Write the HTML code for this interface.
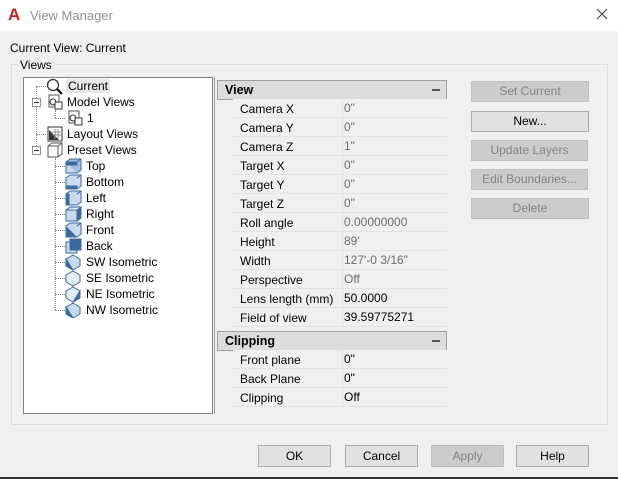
<!DOCTYPE html>
<html><head><style>
*{margin:0;padding:0;box-sizing:border-box}
body{width:618px;height:479px;background:#f0f0f0;font-family:"Liberation Sans",sans-serif;font-size:12px;color:#000;position:relative;overflow:hidden}
.a{position:absolute;white-space:nowrap}
.btn{position:absolute;border:1px solid #adadad;background:#e1e1e1;text-align:center;line-height:19px;font-size:12px}
.dis{background:#cccccc;border-color:#bfbfbf;color:#838383}
.row{position:absolute;left:233px;width:214px;height:19px;border-bottom:1px solid #e3e3e3;background:#f0f0f0}
.row .l{position:absolute;left:7px;top:3px}
.row .v{position:absolute;left:111px;top:2px;color:#6d6d6d}
.row .c{position:absolute;left:109px;top:0;width:1px;height:19px;background:#e3e3e3}
.hdr{position:absolute;left:217px;width:230px;height:20px;background:#dcdcdc;border:1px solid #a0a0a0;font-weight:bold;font-size:12.5px;padding:2px 0 0 7px}
.hdr span{position:absolute;right:6px;top:8px;width:8px;height:2px;background:#555}
.ti{position:absolute;white-space:nowrap;font-size:12px}
</style></head><body>
<div class="a" style="left:0;top:0;width:618px;height:31px;background:#fff"></div>
<div class="a" style="left:8px;top:5px;font-weight:bold;color:#c4232a;font-size:17px">A</div>
<div class="a" style="left:30px;top:8px;color:#909090;font-size:13px">View Manager</div>
<svg class="a" style="left:596px;top:8px" width="12" height="12"><path d="M1 1L11 11M11 1L1 11" stroke="#444" stroke-width="1.1"/></svg>
<div class="a" style="left:10px;top:41px">Current View: Current</div>
<div class="a" style="left:11px;top:64px;width:597px;height:361px;border:1px solid #dcdcdc"></div>
<div class="a" style="left:18px;top:58px;background:#f0f0f0;padding:0 2px">Views</div>
<div class="a" style="left:23px;top:77px;width:190px;height:337px;background:#fff;border:1px solid #828282"></div>
<div class="a" style="left:214px;top:77px;width:1px;height:337px;background:#a0a0a0"></div>
<div class="a" style="left:36px;top:86px;width:1px;height:64px;border-left:1px dotted #888"></div>
<div class="a" style="left:36px;top:86px;width:10px;border-top:1px dotted #888"></div>
<div class="a" style="left:36px;top:134px;width:10px;border-top:1px dotted #888"></div>
<div class="a" style="left:55px;top:110px;width:1px;height:8px;border-left:1px dotted #888"></div>
<div class="a" style="left:55px;top:118px;width:10px;border-top:1px dotted #888"></div>
<div class="a" style="left:55px;top:158px;width:1px;height:152px;border-left:1px dotted #888"></div>
<div class="a" style="left:32px;top:98px;width:9px;height:9px;border:1px solid #919191;background:#fff"><div class="a" style="left:1px;top:3px;width:5px;height:1px;background:#333"></div></div>
<div class="a" style="left:32px;top:146px;width:9px;height:9px;border:1px solid #919191;background:#fff"><div class="a" style="left:1px;top:3px;width:5px;height:1px;background:#333"></div></div>
<svg class="a" style="left:46px;top:78px" width="18" height="18"><circle cx="7" cy="7" r="5.5" fill="#fff" stroke="#333" stroke-width="1.3"/><line x1="11" y1="11" x2="16" y2="16" stroke="#222" stroke-width="2.5"/></svg>
<div class="ti" style="left:66px;top:79px;background:#e8e8e8;padding:0 2px">Current</div>
<svg class="a" style="left:46px;top:94px" width="18" height="16"><rect x="3" y="1" width="10" height="12" fill="#fff" stroke="#555"/><circle cx="7" cy="8" r="3" fill="none" stroke="#333"/><rect x="9" y="8" width="7" height="7" fill="#fff" stroke="#333"/></svg>
<div class="ti" style="left:67px;top:95px">Model Views</div>
<svg class="a" style="left:66px;top:110px" width="18" height="16"><rect x="3" y="1" width="10" height="12" fill="#fff" stroke="#555"/><circle cx="7" cy="8" r="3" fill="none" stroke="#333"/><rect x="9" y="8" width="7" height="7" fill="#fff" stroke="#333"/></svg>
<div class="ti" style="left:87px;top:111px">1</div>
<svg class="a" style="left:47px;top:126px" width="16" height="16"><rect x="1" y="1" width="14" height="14" fill="#fff" stroke="#333"/><path d="M2 14 L2 4 L12 14Z" fill="#333"/><path d="M8 3v10M11 3v10M5 6h9M5 9h9" stroke="#888"/></svg>
<div class="ti" style="left:67px;top:127px">Layout Views</div>
<svg class="a" style="left:46px;top:142px" width="18" height="16"><rect x="2" y="4" width="10" height="11" fill="#fff" stroke="#555"/><path d="M2 4l4-3h10v11l-4 3M12 4l4-3" fill="none" stroke="#555"/></svg>
<div class="ti" style="left:67px;top:143px">Preset Views</div>
<div class="a" style="left:55px;top:166px;width:10px;border-top:1px dotted #888"></div>
<div class="a" style="left:55px;top:182px;width:10px;border-top:1px dotted #888"></div>
<div class="a" style="left:55px;top:198px;width:10px;border-top:1px dotted #888"></div>
<div class="a" style="left:55px;top:214px;width:10px;border-top:1px dotted #888"></div>
<div class="a" style="left:55px;top:230px;width:10px;border-top:1px dotted #888"></div>
<div class="a" style="left:55px;top:246px;width:10px;border-top:1px dotted #888"></div>
<div class="a" style="left:55px;top:262px;width:10px;border-top:1px dotted #888"></div>
<div class="a" style="left:55px;top:278px;width:10px;border-top:1px dotted #888"></div>
<div class="a" style="left:55px;top:294px;width:10px;border-top:1px dotted #888"></div>
<div class="a" style="left:55px;top:310px;width:10px;border-top:1px dotted #888"></div>
<svg class="a" style="left:65px;top:158px" width="18" height="160">
<g stroke="#3d6aa3" fill="#c9d9ee">
<rect x="1" y="4" width="11" height="11"/><path d="M1 4l4-3h11v11l-4 3M12 4l4-3" fill="#9fbde0"/><rect x="1" y="4" width="11" height="3" fill="#3d6aa3"/>
<g transform="translate(0,16)"><rect x="1" y="4" width="11" height="11"/><path d="M1 4l4-3h11v11l-4 3M12 4l4-3"/><rect x="1" y="12" width="11" height="3" fill="#3d6aa3"/></g>
<g transform="translate(0,32)"><rect x="1" y="4" width="11" height="11"/><path d="M1 4l4-3h11v11l-4 3M12 4l4-3"/><rect x="1" y="4" width="3" height="11" fill="#3d6aa3"/></g>
<g transform="translate(0,48)"><rect x="1" y="4" width="11" height="11"/><path d="M12 4l4-3v11l-4 3z" fill="#3d6aa3"/><path d="M1 4l4-3h11" /></g>
<g transform="translate(0,64)"><rect x="1" y="4" width="11" height="11" fill="#3d6aa3"/><path d="M1 4l4-3h11v11l-4 3M12 4l4-3"/></g>
<g transform="translate(0,80)"><rect x="1" y="4" width="11" height="11"/><rect x="5" y="1" width="11" height="11" fill="#3d6aa3"/></g>
<g transform="translate(0,96)"><path d="M8 1l7 4v7l-7 4-7-4V5z"/><path d="M1 5v7l7 4z" fill="#3d6aa3"/></g>
<g transform="translate(0,112)"><path d="M8 1l7 4v7l-7 4-7-4V5z" fill="#e4ecf6"/></g>
<g transform="translate(0,128)"><path d="M8 1l7 4v7l-7 4-7-4V5z" fill="#e4ecf6"/><path d="M15 5v7l-7 4z" fill="#3d6aa3"/></g>
<g transform="translate(0,144)"><path d="M8 1l7 4v7l-7 4-7-4V5z"/><path d="M1 5v7l7 4z" fill="#3d6aa3"/></g>
</g></svg>
<div class="ti" style="left:86px;top:159px">Top</div>
<div class="ti" style="left:86px;top:175px">Bottom</div>
<div class="ti" style="left:86px;top:191px">Left</div>
<div class="ti" style="left:86px;top:207px">Right</div>
<div class="ti" style="left:86px;top:223px">Front</div>
<div class="ti" style="left:86px;top:239px">Back</div>
<div class="ti" style="left:86px;top:255px">SW Isometric</div>
<div class="ti" style="left:86px;top:271px">SE Isometric</div>
<div class="ti" style="left:86px;top:287px">NE Isometric</div>
<div class="ti" style="left:86px;top:303px">NW Isometric</div>
<div class="hdr" style="top:80px">View<span></span></div>
<div class="row" style="top:99px"><div class="l">Camera X</div><div class="c"></div><div class="v">0"</div></div>
<div class="row" style="top:118px"><div class="l">Camera Y</div><div class="c"></div><div class="v">0"</div></div>
<div class="row" style="top:137px"><div class="l">Camera Z</div><div class="c"></div><div class="v">1"</div></div>
<div class="row" style="top:156px"><div class="l">Target X</div><div class="c"></div><div class="v">0"</div></div>
<div class="row" style="top:175px"><div class="l">Target Y</div><div class="c"></div><div class="v">0"</div></div>
<div class="row" style="top:194px"><div class="l">Target Z</div><div class="c"></div><div class="v">0"</div></div>
<div class="row" style="top:213px"><div class="l">Roll angle</div><div class="c"></div><div class="v">0.00000000</div></div>
<div class="row" style="top:232px"><div class="l">Height</div><div class="c"></div><div class="v">89'</div></div>
<div class="row" style="top:251px"><div class="l">Width</div><div class="c"></div><div class="v">127'-0 3/16"</div></div>
<div class="row" style="top:270px"><div class="l">Perspective</div><div class="c"></div><div class="v">Off</div></div>
<div class="row" style="top:289px"><div class="l">Lens length (mm)</div><div class="c"></div><div class="v" style="color:#000">50.0000</div></div>
<div class="row" style="top:308px"><div class="l">Field of view</div><div class="c"></div><div class="v" style="color:#000">39.59775271</div></div>
<div class="hdr" style="top:331px">Clipping<span></span></div>
<div class="row" style="top:350px"><div class="l">Front plane</div><div class="c"></div><div class="v" style="color:#000">0"</div></div>
<div class="row" style="top:369px"><div class="l">Back Plane</div><div class="c"></div><div class="v" style="color:#000">0"</div></div>
<div class="row" style="top:388px"><div class="l">Clipping</div><div class="c"></div><div class="v" style="color:#000">Off</div></div>
<div class="btn dis" style="left:471px;top:81px;width:118px;height:21px">Set Current</div>
<div class="btn" style="left:471px;top:111px;width:118px;height:21px">New...</div>
<div class="btn dis" style="left:471px;top:140px;width:117px;height:21px">Update Layers</div>
<div class="btn dis" style="left:471px;top:169px;width:117px;height:21px">Edit Boundaries...</div>
<div class="btn dis" style="left:471px;top:198px;width:118px;height:21px">Delete</div>
<div class="btn" style="left:258px;top:445px;width:73px;height:22px;line-height:20px">OK</div>
<div class="btn" style="left:345px;top:445px;width:73px;height:22px;line-height:20px">Cancel</div>
<div class="btn dis" style="left:431px;top:445px;width:73px;height:22px;line-height:20px">Apply</div>
<div class="btn" style="left:516px;top:445px;width:73px;height:22px;line-height:20px">Help</div>
<div class="a" style="left:0;top:477px;width:618px;height:2px;background:#333"></div>
</body></html>
